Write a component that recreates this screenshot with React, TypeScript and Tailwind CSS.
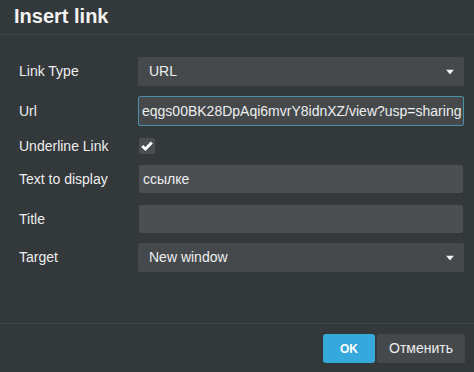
import React from "react";

const Caret = () => (
  <svg width="8" height="5" viewBox="0 0 8 5" className="absolute right-[10px] top-1/2 -translate-y-1/2">
    <path d="M0 0 L8 0 L4 5 Z" fill="#f2f2f2" />
  </svg>
);

export default function App() {
  const font = { fontFamily: '"Liberation Sans", Arial, sans-serif' };
  return (
    <div className="w-[474px] h-[372px] bg-[#33383b] text-[#eeeeee] flex flex-col overflow-hidden" style={font}>
      <div className="h-[35px] border-b border-[#3f4447] flex items-center pl-[14px] pb-[2px]">
        <span className="text-[20px] font-bold text-[#f2f2f2] leading-none">Insert link</span>
      </div>
      <div className="flex-1 flex flex-col pt-[22px] pl-[19px] pr-[10px] text-[14px]">
        <div className="flex items-center h-[29px]">
          <div className="w-[119px]">Link Type</div>
          <div className="relative w-[326px] h-full bg-[#45494c] rounded-[2px] flex items-center pl-[11px]">
            URL
            <Caret />
          </div>
        </div>
        <div className="flex items-center h-[30px] mt-[10px]">
          <div className="w-[119px]">Url</div>
          <div className="w-[326px] h-full bg-[#45494b] border border-[#4a90a8] rounded-[2px] flex items-center pl-[3px] overflow-hidden whitespace-nowrap">
            eqgs00BK28DpAqi6mvrY8idnXZ/view?usp=sharing
          </div>
        </div>
        <div className="flex items-center h-[20px] mt-[10px]">
          <div className="w-[120px]">Underline Link</div>
          <div className="w-[16px] h-[16px] bg-[#4a4e51] rounded-[2px] flex items-center justify-center">
            <svg width="12" height="10" viewBox="0 0 12 10">
              <path d="M1.2 5 L4.4 8 L10.8 1.6" stroke="#ffffff" strokeWidth="2.8" fill="none" />
            </svg>
          </div>
        </div>
        <div className="flex items-center h-[28px] mt-[9px]">
          <div className="w-[120px]">Text to display</div>
          <div className="w-[324px] h-full bg-[#4b4f52] rounded-[2px] flex items-center pl-[4px]">ссылке</div>
        </div>
        <div className="flex items-center h-[28px] mt-[12px]">
          <div className="w-[120px]">Title</div>
          <div className="w-[324px] h-full bg-[#4b4f52] rounded-[2px]"></div>
        </div>
        <div className="flex items-center h-[29px] mt-[10px]">
          <div className="w-[119px]">Target</div>
          <div className="relative w-[326px] h-full bg-[#45494c] rounded-[2px] flex items-center pl-[11px]">
            New window
            <Caret />
          </div>
        </div>
      </div>
      <div className="h-[49px] border-t border-[#3f4447] flex justify-end items-start pt-[10px] pr-[9px]">
        <div className="w-[52px] h-[29px] bg-[#35a8dc] rounded-[3px] flex items-center justify-center text-[12px] font-bold text-white">OK</div>
        <div className="w-[88px] h-[29px] ml-[2px] bg-[#45494c] rounded-[2px] flex items-center justify-center text-[14px] text-[#eeeeee]">Отменить</div>
      </div>
    </div>
  );
}
